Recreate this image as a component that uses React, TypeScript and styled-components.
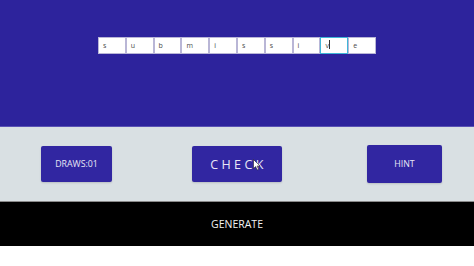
import styled, { createGlobalStyle } from 'styled-components';

const GlobalStyle = createGlobalStyle`
  html, body {
    margin: 0;
    padding: 0;
    background: #ffffff;
    font-family: "Open Sans", "Noto Sans", sans-serif;
  }
`;

const Page = styled.div`
  width: 474px;
  height: 266px;
  display: flex;
  flex-direction: column;
`;

const Board = styled.div`
  height: 127px;
  background-color: #2d239c;
  border-bottom: 1px solid #5a52b5;
  box-sizing: border-box;
  padding-top: 37px;
  display: flex;
  justify-content: center;
  align-items: flex-start;
`;

const Letters = styled.div`
  display: flex;
`;

const LetterBox = styled.div<{ $focused?: boolean }>`
  width: 27.8px;
  height: 17px;
  box-sizing: border-box;
  background-color: #ffffff;
  border: 1px solid ${({ $focused }) => ($focused ? '#3fb6d8' : '#b9b6d6')};
  padding-left: 4px;
  font-size: 7px;
  line-height: 15px;
  color: #4a4a4a;
`;

const Caret = styled.span`
  display: inline-block;
  width: 1px;
  height: 9px;
  margin-left: 0.5px;
  vertical-align: -1px;
  background-color: #333333;
`;

const Controls = styled.div`
  height: 74px;
  background-color: #d9e0e3;
  display: flex;
  align-items: center;
  padding: 0 30px 0 41px;
`;

const ActionButton = styled.button<{ $width: number; $height: number }>`
  position: relative;
  width: ${({ $width }) => $width}px;
  height: ${({ $height }) => $height}px;
  border: none;
  border-radius: 2px;
  background-color: #3126a1;
  color: #e8e6f6;
  font-family: "Open Sans", "Noto Sans", sans-serif;
  font-size: 8.8px;
  padding: 0;
  cursor: pointer;
  box-shadow: 0 1px 2px rgba(0, 0, 0, 0.15);
`;

const CheckButton = styled(ActionButton)`
  font-size: 12.5px;
  letter-spacing: 3.4px;
  padding-left: 3px;
  margin-left: 80px;
  margin-right: 85px;
`;

const Pointer = styled.svg`
  position: absolute;
  left: 61px;
  top: 13px;
`;

const Generate = styled.div`
  height: 45px;
  background-color: #000000;
  border-top: 1px solid #8a8a8a;
  box-sizing: border-box;
  display: flex;
  align-items: center;
  justify-content: center;
  color: #f2f2f2;
  font-size: 10.5px;
`;

const word = 'submissive'.split('');

export default function App() {
  return (
    <Page>
      <GlobalStyle />
      <Board>
        <Letters>
          {word.map((ch, i) => (
            <LetterBox key={i} $focused={i === 8}>
              {ch}
              {i === 8 && <Caret />}
            </LetterBox>
          ))}
        </Letters>
      </Board>
      <Controls>
        <ActionButton $width={71} $height={36}>DRAWS:01</ActionButton>
        <CheckButton $width={90} $height={36}>
          CHECK
          <Pointer width="8" height="12" viewBox="0 0 8 12">
            <path d="M0.5 0.5 L0.5 9.5 L2.6 7.6 L4.2 11 L5.6 10.3 L4 7 L7 7 Z" fill="#ffffff" stroke="#222" strokeWidth="0.6" />
          </Pointer>
        </CheckButton>
        <ActionButton $width={75} $height={38}>HINT</ActionButton>
      </Controls>
      <Generate>GENERATE</Generate>
    </Page>
  );
}
